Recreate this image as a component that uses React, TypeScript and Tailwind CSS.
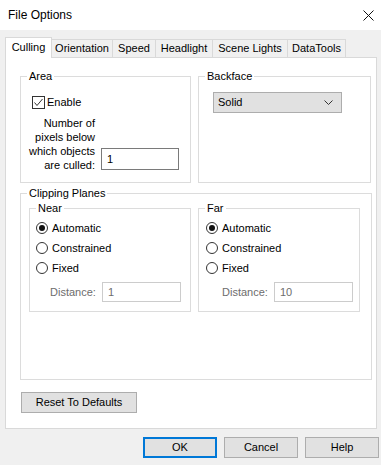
import React from 'react';

const tabs = [
  { label: 'Orientation', w: 'w-[61px]' },
  { label: 'Speed', w: 'w-[43px]' },
  { label: 'Headlight', w: 'w-[57px]' },
  { label: 'Scene Lights', w: 'w-[75px]' },
  { label: 'DataTools', w: 'w-[58px]' },
];

const GroupBox: React.FC<{ title: string; className?: string; children?: React.ReactNode }> = ({ title, className, children }) => (
  <fieldset className={`border border-[#dcdcdc] min-w-0 ${className || ''}`}>
    <legend className="ml-[6px] px-[2px] leading-[14px]">{title}</legend>
    {children}
  </fieldset>
);

const Radio: React.FC<{ checked?: boolean; label: string }> = ({ checked, label }) => (
  <div className="h-[20px] flex items-center gap-[4px]">
    <span className="w-[12px] h-[12px] rounded-full border border-[#333] flex items-center justify-center">
      {checked && <span className="w-[6px] h-[6px] rounded-full bg-[#111]" />}
    </span>
    <span>{label}</span>
  </div>
);

const PlaneBox: React.FC<{ title: string; value: string; radioMl: string; labelMl: string }> = ({ title, value, radioMl, labelMl }) => (
  <GroupBox title={title} className="w-[162px] h-[111px]">
    <div className={`mt-[3px] ${radioMl}`}>
      <Radio checked label="Automatic" />
      <Radio label="Constrained" />
      <Radio label="Fixed" />
    </div>
    <div className={`mt-[4px] flex items-center gap-[7px] ${labelMl}`}>
      <span className="w-[45px] text-[#6d6d6d]">Distance:</span>
      <div className="w-[79px] h-[20px] border border-[#cccccc] pl-[5px] flex items-center text-[#6d6d6d]">{value}</div>
    </div>
  </GroupBox>
);

export default function App() {
  return (
    <div className="w-[381px] h-[465px] bg-[#f0f0f0] flex flex-col text-[11px] text-black font-['Liberation_Sans',Arial,sans-serif] overflow-hidden">
      {/* title bar */}
      <div className="h-[30px] bg-white flex items-center justify-between pl-[8px] pr-[7px] shrink-0">
        <span className="text-[12px]">File Options</span>
        <svg width="11" height="11" viewBox="0 0 11 11">
          <path d="M0.5 0.5 L10.5 10.5 M10.5 0.5 L0.5 10.5" stroke="#111" strokeWidth="1" fill="none" />
        </svg>
      </div>

      {/* tabs */}
      <div className="mt-[7px] pl-[5px] flex items-end h-[21px] -mb-px relative z-10">
        <div className="w-[47px] h-[21px] bg-white border-l border-t border-r border-[#d9d9d9] flex items-center justify-center pb-[1px]">
          Culling
        </div>
        {tabs.map(t => (
          <div key={t.label} className={`${t.w} h-[19px] bg-[#f0f0f0] border-t border-r border-b border-[#d9d9d9] flex items-center justify-center`}>
            {t.label}
          </div>
        ))}
      </div>

      {/* panel */}
      <div className="ml-[5px] w-[372px] h-[372px] bg-white border border-[#d9d9d9] pl-[14px] pt-[11px] flex flex-col shrink-0">
        <div className="flex gap-[7px]">
          <GroupBox title="Area" className="w-[171px] h-[114px]">
            <div className="mt-[12px] ml-[11px] h-[15px] flex items-center gap-[2px]">
              <span className="w-[13px] h-[13px] border border-[#333] flex items-center justify-center">
                <svg width="11" height="11" viewBox="0 0 11 11">
                  <path d="M1.5 5.5 L4 8.5 L9.5 2" stroke="#333" strokeWidth="1" fill="none" />
                </svg>
              </span>
              <span>Enable</span>
            </div>
            <div className="mt-[6px] flex items-end gap-[6px]">
              <div className="w-[74px] text-right leading-[14px]">
                Number of pixels below which objects are culled:
              </div>
              <div className="w-[78px] h-[22px] border border-[#7a7a7a] pl-[5px] flex items-center mb-[2px]">1</div>
            </div>
          </GroupBox>
          <GroupBox title="Backface" className="w-[173px] h-[114px]">
            <div className="mt-[9px] ml-[14px] w-[129px] h-[21px] bg-[#e1e1e1] border border-[#adadad] flex items-center justify-between pl-[4px] pr-[8px]">
              <span>Solid</span>
              <svg width="9" height="5" viewBox="0 0 9 5">
                <path d="M0.5 0.5 L4.5 4.5 L8.5 0.5" stroke="#333" strokeWidth="1" fill="none" />
              </svg>
            </div>
          </GroupBox>
        </div>

        <GroupBox title="Clipping Planes" className="mt-[3px] w-[352px] h-[194px]">
          <div className="pl-[8px] pt-[1px] flex gap-[7px]">
            <PlaneBox title="Near" value="1" radioMl="ml-[6px]" labelMl="ml-[20px]" />
            <PlaneBox title="Far" value="10" radioMl="ml-[7px]" labelMl="ml-[23px]" />
          </div>
        </GroupBox>

        <button className="mt-[12px] ml-[1px] w-[116px] h-[21px] bg-[#e1e1e1] border border-[#adadad] flex items-center justify-center">
          Reset To Defaults
        </button>
      </div>

      {/* dialog buttons */}
      <div className="mt-[8px] pr-[2px] flex justify-end gap-[7px]">
        <button className="w-[74px] h-[21px] bg-[#e1e1e1] border-2 border-[#0078d7] flex items-center justify-center">OK</button>
        <button className="w-[74px] h-[21px] bg-[#e1e1e1] border border-[#adadad] flex items-center justify-center">Cancel</button>
        <button className="w-[74px] h-[21px] bg-[#e1e1e1] border border-[#adadad] flex items-center justify-center">Help</button>
      </div>
    </div>
  );
}
